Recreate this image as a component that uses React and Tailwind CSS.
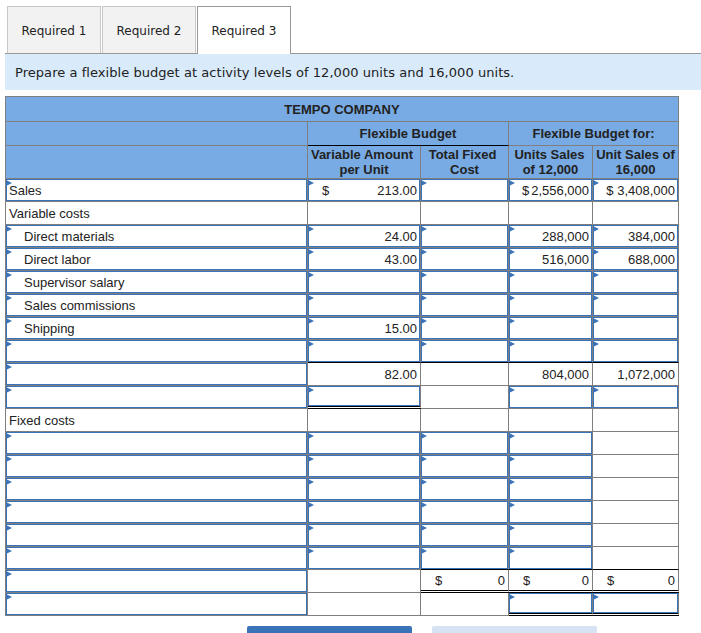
import React from "react";

const SANS = "font-['Liberation_Sans',Arial,sans-serif]";
const I = "i";

function Tri() {
  return <span className="absolute left-0 top-[1px] w-0 h-0 border-l-[6px] border-l-[#3b73b9] border-y-[3.5px] border-y-transparent" />;
}

function Cell({ kind, text, left, indent, cur, extra = "" }) {
  const isInput = kind === I;
  return (
    <div className={`relative border-r border-b border-[#7f7f7f] bg-white text-[13px] leading-[21px] text-[#222] ${extra}`}>
      <div className={`h-full flex items-center ${isInput ? "border border-[#3b73b9] pr-[2px]" : "pr-[3px]"} ${left ? (indent ? "pl-[17px]" : isInput ? "pl-[2px]" : "pl-[3px]") : "justify-end"}`}>
        {cur ? <span className="absolute left-[14px]">{cur}</span> : null}
        {text}
      </div>
      {isInput ? <Tri /> : null}
    </div>
  );
}

const money = (v) => (
  <span>
    $<span className="ml-[2px]">{v}</span>
  </span>
);

const rows = [
  { l: "Sales", i: true, c: [[I, "213.00", "$"], [I, ""], [I, money("2,556,000")], [I, "$ 3,408,000"]] },
  { l: "Variable costs", i: false, c: [["", ""], ["", ""], ["", ""], ["", ""]] },
  { l: "Direct materials", ind: true, i: true, c: [[I, "24.00"], [I, ""], [I, "288,000"], [I, "384,000"]] },
  { l: "Direct labor", ind: true, i: true, c: [[I, "43.00"], [I, ""], [I, "516,000"], [I, "688,000"]] },
  { l: "Supervisor salary", ind: true, i: true, c: [[I, ""], [I, ""], [I, ""], [I, ""]] },
  { l: "Sales commissions", ind: true, i: true, c: [[I, ""], [I, ""], [I, ""], [I, ""]] },
  { l: "Shipping", ind: true, i: true, c: [[I, "15.00"], [I, ""], [I, ""], [I, ""]] },
  { l: "", i: true, c: [[I, "", null, "line"], [I, "", null, "line"], [I, "", null, "line"], [I, "", null, "line"]] },
  { l: "", i: true, c: [["", "82.00"], ["", ""], ["", "804,000"], ["", "1,072,000"]] },
  { l: "", i: true, c: [[I, "", null, "dbl"], ["", ""], [I, ""], [I, ""]] },
  { l: "Fixed costs", i: false, c: [["", ""], ["", ""], ["", ""], ["", ""]] },
  ...[0, 1, 2, 3, 4].map(() => ({ l: "", i: true, c: [[I, ""], [I, ""], [I, ""], ["", ""]] })),
  { l: "", i: true, c: [[I, ""], [I, "", null, "line"], [I, "", null, "line"], ["", "", null, "line"]] },
  { l: "", i: true, c: [["", ""], ["", "0", "$", "dbl"], ["", "0", "$", "dbl"], ["", "0", "$", "dbl"]] },
  { l: "", i: true, c: [["", ""], ["", ""], [I, "", null, "dbl"], [I, "", null, "dbl"]] },
];

function Tab({ label, active }) {
  return (
    <div className={`w-[94px] flex items-center justify-center border border-b-0 text-[12px] text-[#222] ${active ? "h-[48px] -mb-px bg-white border-[#999]" : "h-[47px] pt-[2px] bg-[#f2f2f2] border-[#c8c8c8]"}`}>
      {label}
    </div>
  );
}

const heads = [
  ["Variable Amount", "per Unit", "pr-[4px]"],
  ["Total Fixed", "Cost", "pr-[4px]"],
  ["Units Sales", "of 12,000", "pr-[2px]"],
  ["Unit Sales of", "16,000", ""],
];

export default function App() {
  return (
    <div className="relative w-[701px] h-[633px] overflow-hidden bg-white font-['DejaVu_Sans',Verdana,sans-serif]">
      <div className="ml-[5px] flex gap-[1px] pl-[2px] pt-[6px] border-b border-[#999]">
        <Tab label="Required 1" />
        <Tab label="Required 2" />
        <Tab label="Required 3" active />
      </div>
      <div className="ml-[5px] h-[36px] bg-[#d9ebfa] flex items-center pl-[10px] pt-[2px] text-[13px] tracking-[0.05px] text-[#222]">
        Prepare a flexible budget at activity levels of 12,000 units and 16,000 units.
      </div>
      <div className={`ml-[5px] mt-[6px] w-[674px] border-l border-t border-[#7f7f7f] ${SANS} grid grid-cols-[302px_113px_88px_84px_86px] grid-rows-[25px_24px_33px_repeat(19,23px)]`}>
        <div className="col-span-5 bg-[#78aae3] border-r border-b border-[#7f7f7f] flex items-center justify-center pt-[2px] font-bold text-[13px] text-[#222]">TEMPO COMPANY</div>
        <div className="bg-[#78aae3] border-r border-b border-[#7f7f7f]" />
        <div className="col-span-2 bg-[#78aae3] border-r border-b border-r-[#7f7f7f] border-b-black flex items-center justify-center font-bold text-[13px] text-[#222]">Flexible Budget</div>
        <div className="col-span-2 bg-[#78aae3] border-r border-b border-[#7f7f7f] flex items-center justify-center font-bold text-[13px] text-[#222]">Flexible Budget for:</div>
        <div className="bg-[#78aae3] border-r border-b border-[#7f7f7f]" />
        {heads.map(([a, b, p]) => (
          <div key={a} className="bg-[#78aae3] border-r border-b border-[#7f7f7f] flex flex-col items-center justify-center text-center font-bold text-[13px] leading-[15px] whitespace-nowrap text-[#222]">
            <span className={p}>{a}</span>
            <span>{b}</span>
          </div>
        ))}
        {rows.map((r, ri) => (
          <React.Fragment key={ri}>
            <Cell kind={r.i ? I : ""} text={r.l} left indent={r.ind} />
            {r.c.map((c, ci) => {
              const [kind, text, cur, mode] = c;
              const cls =
                mode === "line"
                  ? "border-b-black"
                  : mode === "dbl"
                  ? "border-b-[3px] border-b-black [border-bottom-style:double]"
                  : "";
              return <Cell key={ci} kind={kind} text={text} cur={cur} extra={cls} />;
            })}
          </React.Fragment>
        ))}
      </div>
      <div className="absolute left-[247px] top-[626px] w-[165px] h-[7px] bg-[#3b73b9] rounded-t-[2px]" />
      <div className="absolute left-[432px] top-[626px] w-[165px] h-[7px] bg-[#d7e3f2] rounded-t-[2px]" />
    </div>
  );
}
